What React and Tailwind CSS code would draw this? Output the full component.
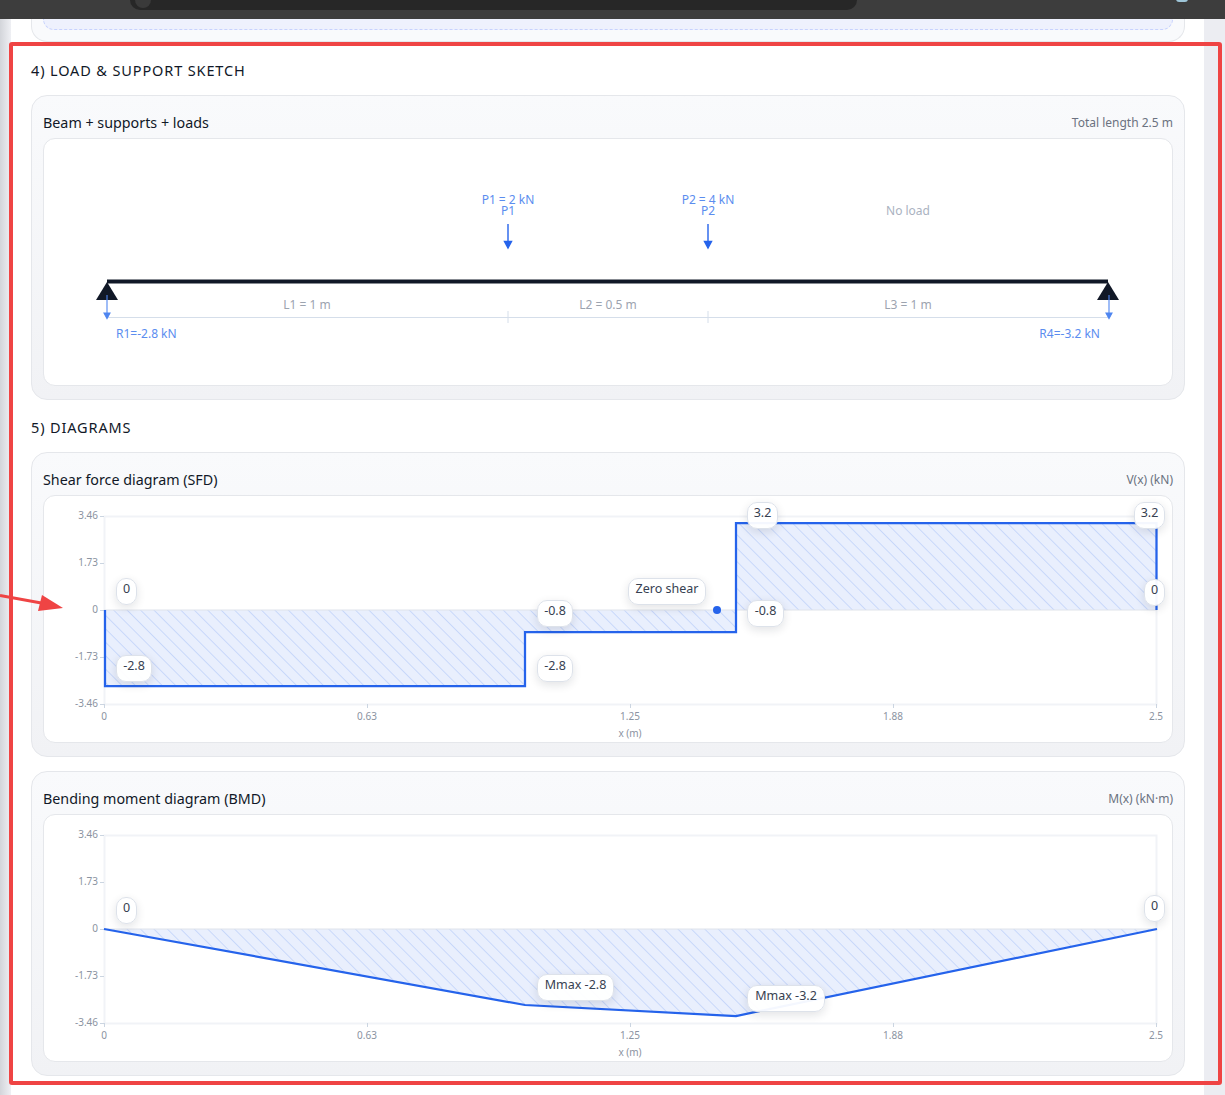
import React from 'react';

const Pill = ({ className, children }) => (
  <div className={`absolute h-[27px] flex items-center justify-center pb-[5px] rounded-[10px] bg-white/95 border border-[#dde2ea] shadow-[0_3px_10px_rgba(15,23,42,0.12)] text-[12.5px] text-[#374151] whitespace-nowrap ${className}`}>
    {children}
  </div>
);

const Card = ({ title, note, children }) => (
  <div className="rounded-2xl border border-[#e5e7eb] bg-gradient-to-b from-[#f9fafc] to-[#f1f2f5] px-[11px] pb-[13px]">
    <div className="h-[42px] pt-[12px] flex items-center justify-between">
      <span className="text-[14.3px] text-[#111827]">{title}</span>
      <span className="text-[12px] text-[#6b7280]">{note}</span>
    </div>
    <div className="relative h-[248px] rounded-xl border border-[#e5e7eb] bg-white overflow-hidden">
      {children}
    </div>
  </div>
);

const yTicks = [
  [516, '3.46'],
  [563, '1.73'],
  [610, '0'],
  [657, '-1.73'],
  [704, '-3.46'],
];
const xTicks = [
  [104, '0'],
  [367, '0.63'],
  [630, '1.25'],
  [893, '1.88'],
  [1156, '2.5'],
];

const Chart = ({ id, area, children }) => (
  <svg viewBox="44 496 1128 246" className="block w-full h-full">
    <defs>
      <pattern id={id} width="9.5" height="10" patternUnits="userSpaceOnUse" patternTransform="rotate(-45)">
        <rect width="9.5" height="10" fill="#2563eb" fillOpacity="0.1" />
        <line x1="0" y1="0" x2="0" y2="10" stroke="#2563eb" strokeOpacity="0.22" strokeWidth="1.5" />
      </pattern>
    </defs>
    <path d="M104.5 516.5H1156.5V704.5H104.5Z" fill="none" stroke="#f1f3f7" strokeWidth="2" />
    {yTicks.map(([y, t]) => (
      <g key={t}>
        <line x1="100" x2="104" y1={y + 0.5} y2={y + 0.5} stroke="#cbd5e1" />
        <text x="98" y={y + 2.5} textAnchor="end" fontSize="10" fill="#8b93a1">{t}</text>
      </g>
    ))}
    {xTicks.map(([x, t]) => (
      <g key={t}>
        <line x1={x + 0.5} x2={x + 0.5} y1="704" y2="708" stroke="#cbd5e1" />
        <text x={x} y="720" textAnchor="middle" fontSize="10" fill="#8b93a1">{t}</text>
      </g>
    ))}
    <text x="630" y="737" textAnchor="middle" fontSize="10" fill="#8b93a1">x (m)</text>
    <path d={area} fill={`url(#${id})`} stroke="none" />
    <line x1="104" x2="1157" y1="610" y2="610" stroke="#dfe3ea" />
    {children}
  </svg>
);

const Sketch = () => (
  <svg viewBox="44 139 1128 246" className="block w-full h-full">
    <text x="508" y="204" textAnchor="middle" fontSize="12" fill="#5b8def">P1 = 2 kN</text>
    <text x="508" y="215" textAnchor="middle" fontSize="12" fill="#5b8def">P1</text>
    <path d="M508 224V245M504.5 241.5H511.5L508 248Z" stroke="#2563eb" strokeWidth="1.4" fill="#2563eb" />
    <text x="708" y="204" textAnchor="middle" fontSize="12" fill="#5b8def">P2 = 4 kN</text>
    <text x="708" y="215" textAnchor="middle" fontSize="12" fill="#5b8def">P2</text>
    <path d="M708 224V245M704.5 241.5H711.5L708 248Z" stroke="#2563eb" strokeWidth="1.4" fill="#2563eb" />
    <text x="908" y="215" textAnchor="middle" fontSize="12" fill="#aab2bf">No load</text>

    <line x1="107" x2="1108" y1="281.5" y2="281.5" stroke="#111827" strokeWidth="4" />
    <path d="M107 282L118 300H96Z" fill="#111827" />
    <path d="M1108 282L1119 300H1097Z" fill="#111827" />

    <line x1="107" x2="1108" y1="317.5" y2="317.5" stroke="#d5deea" />
    <line x1="508" x2="508" y1="311" y2="323" stroke="#d5deea" />
    <line x1="708" x2="708" y1="311" y2="323" stroke="#d5deea" />
    <text x="307" y="309" textAnchor="middle" fontSize="12" fill="#9ca3af">L1 = 1 m</text>
    <text x="608" y="309" textAnchor="middle" fontSize="12" fill="#9ca3af">L2 = 0.5 m</text>
    <text x="908" y="309" textAnchor="middle" fontSize="12" fill="#9ca3af">L3 = 1 m</text>

    <path d="M107 295V316M104 313H110L107 318.5Z" stroke="#4f86f0" strokeWidth="1.1" fill="#4f86f0" />
    <path d="M1109 295V316M1106 313H1112L1109 318.5Z" stroke="#4f86f0" strokeWidth="1.1" fill="#4f86f0" />
    <text x="116" y="338" fontSize="12" fill="#5b8def">R1=-2.8 kN</text>
    <text x="1100" y="338" textAnchor="end" fontSize="12" fill="#5b8def">R4=-3.2 kN</text>
  </svg>
);

export default function App() {
  return (
    <div className="relative w-[1225px] h-[1095px] overflow-hidden bg-[#eceef2] font-['Noto_Sans',sans-serif]">
      {/* browser chrome strip at the top of the capture */}
      <div className="h-[19px] bg-[#3d3d3d] flex">
        <div className="ml-[130px] w-[727px] h-[10px] rounded-b-[14px] bg-[#272727] overflow-hidden">
          <div className="ml-[5px] -mt-[8px] w-[16px] h-[16px] rounded-full bg-[#3a3a3a]" />
        </div>
        <div className="ml-[319px] -mt-[4px] w-[12px] h-[6px] rounded-full bg-[#9ec5d8]" />
      </div>

      <div className="flex h-[1076px]">
        <div className="w-[11px] bg-gradient-to-r from-[#d3d5da] to-[#eff0f4]" />
        <main className="w-[1193px] bg-white pl-[20px] pr-[19px]">
          <div className="h-[23px] rounded-b-2xl border border-t-0 border-[#e5e7eb] bg-[#f9fafc] px-[11px]">
            <div className="h-[11px] rounded-b-xl border border-t-0 border-dashed border-[#c7d2fe] bg-[#eef1fd]" />
          </div>

          <h2 className="mt-[18px] mb-[15px] text-[14.5px] leading-[20px] font-normal tracking-[0.06em] text-[#111827]">4) LOAD &amp; SUPPORT SKETCH</h2>
          <Card title="Beam + supports + loads" note="Total length 2.5 m">
            <Sketch />
          </Card>

          <h2 className="mt-[17px] mb-[15px] text-[14.5px] leading-[20px] font-normal tracking-[0.06em] text-[#111827]">5) DIAGRAMS</h2>
          <Card title="Shear force diagram (SFD)" note="V(x) (kN)">
            <Chart id="hatch-sfd" area="M104.5 610V686H525V632H736V523H1156.5V610Z">
              <path d="M105 610V686H525V632H736V523H1156.5V610" fill="none" stroke="#2563eb" strokeWidth="2.25" />
              <circle cx="717" cy="610" r="4" fill="#2563eb" />
            </Chart>
            <Pill className="left-[72px] top-[82px] w-[21px]">0</Pill>
            <Pill className="left-[72px] top-[159px] w-[36px]">-2.8</Pill>
            <Pill className="left-[493px] top-[104px] w-[36px]">-0.8</Pill>
            <Pill className="left-[493px] top-[159px] w-[36px]">-2.8</Pill>
            <Pill className="left-[584px] top-[82px] w-[78px]">Zero shear</Pill>
            <Pill className="left-[703px] top-[6px] w-[31px]">3.2</Pill>
            <Pill className="left-[703px] top-[104px] w-[37px]">-0.8</Pill>
            <Pill className="left-[1090px] top-[6px] w-[31px]">3.2</Pill>
            <Pill className="left-[1100px] top-[83px] w-[21px]">0</Pill>
          </Card>

          <div className="mt-[14px]">
            <Card title="Bending moment diagram (BMD)" note="M(x) (kN·m)">
              <Chart id="hatch-bmd" area="M104 610L525 686L736 697L1157 610Z">
                <path d="M104 610L525 686L736 697L1157 610" fill="none" stroke="#2563eb" strokeWidth="2.25" />
              </Chart>
              <Pill className="left-[72px] top-[82px] w-[21px]">0</Pill>
              <Pill className="left-[1100px] top-[80px] w-[21px]">0</Pill>
              <Pill className="left-[493px] top-[159px] w-[77px]">Mmax -2.8</Pill>
              <Pill className="left-[703px] top-[170px] w-[78px]">Mmax -3.2</Pill>
            </Card>
          </div>
        </main>
        <div className="w-[21px] bg-[#ecedf2]" />
      </div>

      {/* red annotation drawn over the capture */}
      <div className="absolute left-[9px] top-[42px] w-[1213px] h-[1043px] border-4 border-[#ef4444] rounded-[3px] pointer-events-none" />
      <svg className="absolute left-0 top-[590px] w-[70px] h-[26px]" viewBox="0 590 70 26">
        <path d="M0 595.5L44 603.5" stroke="#ef4444" strokeWidth="3" />
        <path d="M63 608L42 595L38 611Z" fill="#ef4444" />
      </svg>
    </div>
  );
}
